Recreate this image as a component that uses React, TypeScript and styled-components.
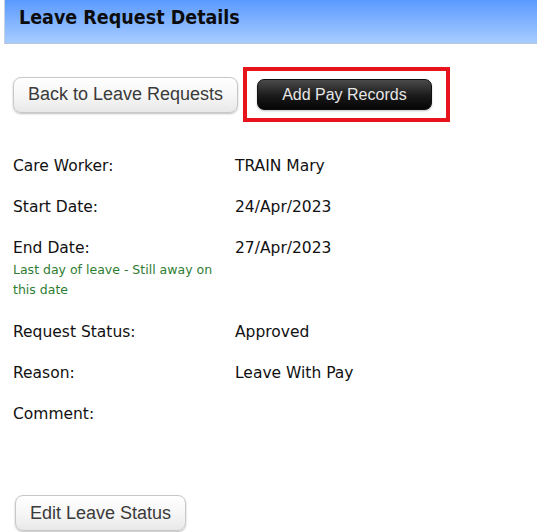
import styled, { createGlobalStyle } from 'styled-components';

const GlobalStyle = createGlobalStyle`
  html, body {
    margin: 0;
    padding: 0;
    background: #ffffff;
  }
  body {
    font-family: "DejaVu Sans", Verdana, sans-serif;
    color: #111;
  }
`;

const Page = styled.div`
  width: 537px;
  height: 532px;
  overflow: hidden;
  padding-left: 4px;
  box-sizing: border-box;
`;

const TitleBar = styled.div`
  height: 44px;
  box-sizing: border-box;
  background: linear-gradient(to bottom, #5a9aff 0%, #a8ccff 100%);
  border-bottom: 1px solid #b9c6d8;
  border-left: 1px solid #c5d3e6;
  display: flex;
  align-items: center;
  padding: 0 0 9px 14px;
`;

const Title = styled.h1`
  margin: 0;
  font-family: "DejaVu Sans Condensed", "DejaVu Sans", sans-serif;
  font-stretch: condensed;
  font-size: 19.5px;
  font-weight: bold;
  color: #0c0c0c;
`;

const Content = styled.div`
  padding: 23px 0 0 9px;
`;

const Toolbar = styled.div`
  display: flex;
  align-items: center;
  gap: 5px;
`;

const Button = styled.button<{ $dark?: boolean }>`
  font-family: "Liberation Sans", Arial, sans-serif;
  font-size: ${p => (p.$dark ? '16px' : '18px')};
  height: ${p => (p.$dark ? '31px' : '36px')};
  padding: ${p => (p.$dark ? '0 24px' : '0 14px')};
  border-radius: ${p => (p.$dark ? '7px' : '8px')};
  cursor: pointer;
  color: ${p => (p.$dark ? '#e6e6e6' : '#3a3a3a')};
  border: 1px solid ${p => (p.$dark ? '#111' : '#c8c8c8')};
  background: ${p =>
    p.$dark
      ? 'linear-gradient(to bottom, #4a4a4a 0%, #1a1a1a 55%, #050505 100%)'
      : 'linear-gradient(to bottom, #ffffff 0%, #f4f4f4 60%, #e8e8e8 100%)'};
  box-shadow: 0 1px 2px rgba(0, 0, 0, 0.25);
`;

const Highlight = styled.div`
  border: 4px solid #e8141c;
  padding: 8px 14px 8px 10px;
  display: flex;
`;

const Details = styled.div`
  margin-top: 34px;
  display: flex;
  flex-direction: column;
  gap: 20px;
`;

const Row = styled.div`
  display: grid;
  grid-template-columns: 222px 1fr;
  font-size: 15.5px;
  line-height: 21px;
  color: #111;
`;

const Label = styled.div``;

const Note = styled.div`
  font-size: 12.5px;
  line-height: 20px;
  color: #2f7d32;
  width: 210px;
  margin: 1px 0 2px;
`;

const Footer = styled.div`
  margin-top: 70px;
  padding-left: 2px;
`;

const rows: { label: string; value: string; note?: string }[] = [
  { label: 'Care Worker:', value: 'TRAIN Mary' },
  { label: 'Start Date:', value: '24/Apr/2023' },
  { label: 'End Date:', value: '27/Apr/2023', note: 'Last day of leave - Still away on this date' },
  { label: 'Request Status:', value: 'Approved' },
  { label: 'Reason:', value: 'Leave With Pay' },
  { label: 'Comment:', value: '' },
];

export default function App() {
  return (
    <Page>
      <GlobalStyle />
      <TitleBar>
        <Title>Leave Request Details</Title>
      </TitleBar>
      <Content>
        <Toolbar>
          <Button>Back to Leave Requests</Button>
          <Highlight>
            <Button $dark>Add Pay Records</Button>
          </Highlight>
        </Toolbar>
        <Details>
          {rows.map(r => (
            <Row key={r.label}>
              <Label>
                {r.label}
                {r.note && <Note>{r.note}</Note>}
              </Label>
              <div>{r.value}</div>
            </Row>
          ))}
        </Details>
        <Footer>
          <Button>Edit Leave Status</Button>
        </Footer>
      </Content>
    </Page>
  );
}
